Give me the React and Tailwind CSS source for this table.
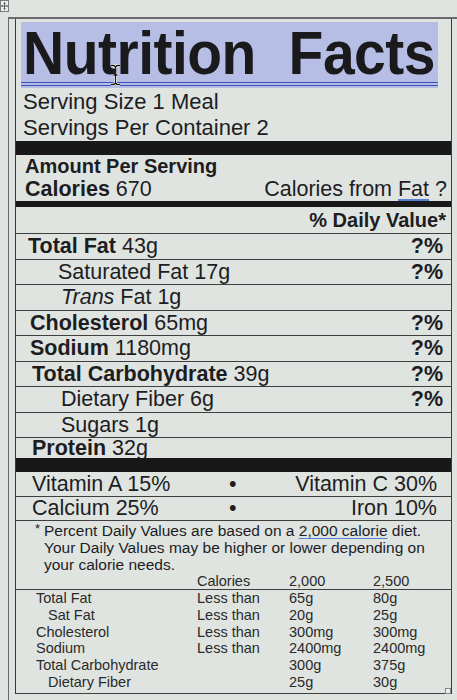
import React from 'react'

const nutrients = [
  { bold: 'Total Fat', amt: '43g', pct: '?%', pl: 'pl-[12px]' },
  { label: 'Saturated Fat 17g', pct: '?%', pl: 'pl-[42px]' },
  { trans: true, pl: 'pl-[45px]' },
  { bold: 'Cholesterol', amt: '65mg', pct: '?%', pl: 'pl-[14px]' },
  { bold: 'Sodium', amt: '1180mg', pct: '?%', pl: 'pl-[14px]' },
  { bold: 'Total Carbohydrate', amt: '39g', pct: '?%', pl: 'pl-[16px]' },
  { label: 'Dietary Fiber 6g', pct: '?%', pl: 'pl-[45px]' },
  { label: 'Sugars 1g', pl: 'pl-[45px]' },
]

const limits = [
  ['Total Fat', 'Less than', '65g', '80g', false],
  ['Sat Fat', 'Less than', '20g', '25g', true],
  ['Cholesterol', 'Less than', '300mg', '300mg', false],
  ['Sodium', 'Less than', '2400mg', '2400mg', false],
  ['Total Carbohydrate', '', '300g', '375g', false],
  ['Dietary Fiber', '', '25g', '30g', true],
]

function IBeam(){
  return (
    <svg className="absolute left-[110px] top-[64px]" width="11" height="22" viewBox="0 0 11 22">
      <path d="M1 1.5h3l1.5 1.5l1.5-1.5h3M5.5 3v16M1 20.5h3l1.5-1.5l1.5 1.5h3M3.5 11h4" stroke="#fff" strokeWidth="3" fill="none"/>
      <path d="M1 1.5h3l1.5 1.5l1.5-1.5h3M5.5 3v16M1 20.5h3l1.5-1.5l1.5 1.5h3M3.5 11h4" stroke="#111" strokeWidth="1.3" fill="none"/>
    </svg>
  )
}

export default function App(){
  return (
    <div className="relative w-[457px] h-[700px] overflow-hidden bg-[#dfe4e1] pt-[17px] pl-[8px] font-['Liberation_Sans',Arial,sans-serif] text-[#1d1d1f]">
      {/* table move handle */}
      <svg className="absolute left-0 top-0" width="9" height="12" viewBox="0 0 9 12">
        <rect x="0.5" y="0.5" width="8" height="11" fill="#eceeed" stroke="#7a7a7a"/>
        <path d="M4.5 2.5v7M1.5 6h6M3.5 3.5l1-1l1 1M3.5 8.5l1 1l1-1M2.5 5l-1 1l1 1M6.5 5l1 1l-1 1" stroke="#444" strokeWidth="0.8" fill="none"/>
      </svg>
      <IBeam/>
      <div className="h-full border-t-2 border-l border-[#6a6a6a] pl-[6px]">
        <div className="w-[437px] border-l-[1.5px] border-r-[1.5px] border-[#3a3a3a]">
          {/* title */}
          <div className="h-[70px] pt-[3px] pl-[5px]">
            <div className="w-[417px] h-[66px] bg-[#b7bee5] pb-[2px]">
              <div className="h-full flex items-center justify-between pl-[2px] pr-[3px] border-b-[4px] border-double border-[#3d50b8] text-[57px] font-bold leading-none tracking-[-0.5px] text-[#1a1a1c]">
                <span className="inline-block scale-y-[1.08]">Nutrition</span>
                <span className="inline-block scale-y-[1.08]">Facts</span>
              </div>
            </div>
          </div>
          <div className="pl-[7px] text-[22px] leading-[26px] h-[52px]">
            <div>Serving Size 1 Meal</div>
            <div>Servings Per Container 2</div>
          </div>
          <div className="h-[14px] bg-[#181818]" />
          <div className="pl-[9px] pr-[4px]">
            <div className="h-[23px] leading-[23px] text-[20px] font-bold">Amount Per Serving</div>
            <div className="h-[23px] leading-[23px] text-[21.5px] flex justify-between">
              <span><b>Calories</b> 670</span>
              <span>Calories from <span className="underline decoration-[#5b7fd0] underline-offset-[3px]">Fat</span> ?</span>
            </div>
          </div>
          <div className="h-[6px] bg-[#181818]" />
          <div className="h-[26px] leading-[26px] text-right pr-[5px] text-[20px] font-bold">% Daily Value*</div>
          {nutrients.map((n, i) => (
            <div key={i} className={`h-[25.5px] border-t border-[#3f3f3f] flex items-center justify-between pr-[8px] text-[21.5px] leading-[24px] ${n.pl}`}>
              <span>
                {n.bold && <><b>{n.bold}</b> {n.amt}</>}
                {n.label}
                {n.trans && <><i>Trans</i> Fat 1g</>}
              </span>
              {n.pct && <b>{n.pct}</b>}
            </div>
          ))}
          <div className="h-[21px] border-t border-[#3f3f3f] flex items-center pl-[16px] text-[21.5px] leading-[20px]">
            <span><b>Protein</b> 32g</span>
          </div>
          <div className="h-[14px] bg-[#181818]" />
          <div className="h-[25px] border-b border-[#3f3f3f] grid grid-cols-[197px_30px_1fr] items-center pl-[16px] pr-[14px] text-[21.5px] leading-[24px]">
            <span>Vitamin A 15%</span><span>•</span><span className="text-right">Vitamin C 30%</span>
          </div>
          <div className="h-[24px] border-b border-[#3f3f3f] grid grid-cols-[197px_30px_1fr] items-center pl-[16px] pr-[14px] text-[21.5px] leading-[23px]">
            <span>Calcium 25%</span><span>•</span><span className="text-right">Iron 10%</span>
          </div>
          <div className="flex pl-[19px] pt-[1px] text-[15.5px] leading-[17px] h-[52px]">
            <span className="w-[9px] text-[13px] leading-[13px]">*</span>
            <div>
              <div className="whitespace-nowrap">Percent Daily Values are based on a <span className="underline decoration-[#5b7fd0] underline-offset-[2px]">2,000 calorie</span> diet.</div>
              <div className="whitespace-nowrap">Your Daily Values may be higher or lower depending on</div>
              <div>your calorie needs.</div>
            </div>
          </div>
          <div className="grid grid-cols-[161px_92px_84px_1fr] pl-[20px] h-[16px] text-[14.5px] leading-[16px] text-[#2a2a2a]">
            <span /><span>Calories</span><span>2,000</span><span>2,500</span>
          </div>
          <div className="border-t border-b border-[#3f3f3f] pb-[2px] mb-[40px]">
            {limits.map(([a, b, c, d, ind], i) => (
              <div key={i} className={`grid h-[16.8px] leading-[16.8px] text-[14.5px] text-[#2a2a2a] ${ind ? 'pl-[32px] grid-cols-[149px_92px_84px_1fr]' : 'pl-[20px] grid-cols-[161px_92px_84px_1fr]'}`}>
                <span>{a}</span><span>{b}</span><span>{c}</span><span>{d}</span>
              </div>
            ))}
          </div>
        </div>
      </div>
      <div className="absolute left-[445px] top-[688px] w-[6px] h-[6px] border border-[#888] bg-[#eee]" />
    </div>
  )
}
